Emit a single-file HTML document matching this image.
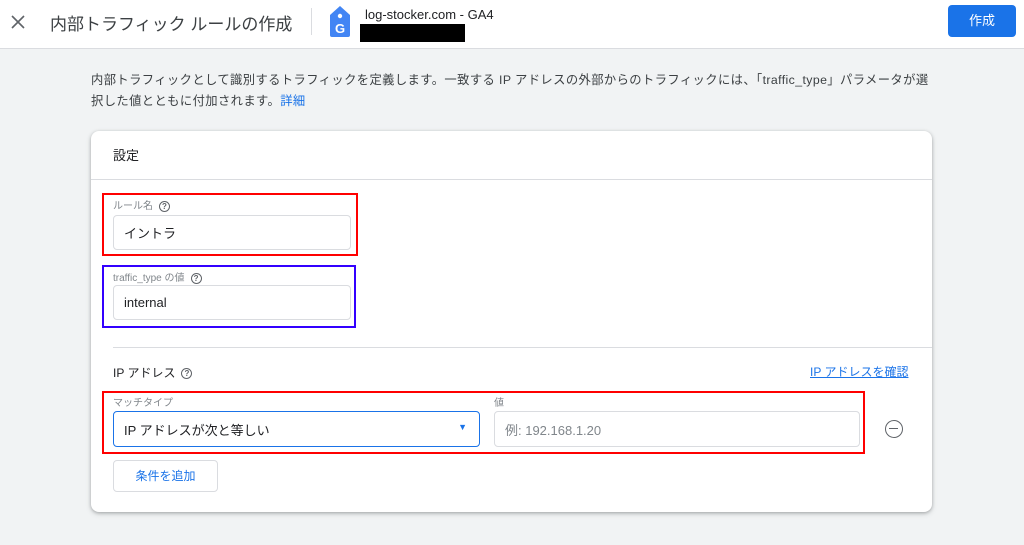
<!DOCTYPE html>
<html><head><meta charset="utf-8"><style>
*{box-sizing:border-box;margin:0;padding:0}
body{width:1024px;height:545px;background:#f1f3f4;font-family:"Liberation Sans","Noto Sans CJK JP",sans-serif;position:relative;overflow:hidden;color:#202124}
.a{position:absolute}
.hdr{left:0;top:0;width:1024px;height:49px;background:#fff;border-bottom:1px solid #dadce0}
.card{left:91px;top:131px;width:841px;height:381px;background:#fff;border-radius:8px;box-shadow:0 1px 3px rgba(60,64,67,.35),0 2px 6px rgba(60,64,67,.15)}
.inp{border:1px solid #dadce0;border-radius:4px;background:#fff;font-size:13px;padding-left:10px;display:flex;align-items:center}
.lbl{font-size:10px;color:#80868b}
.q{display:inline-block;width:11px;height:11px;border:1.3px solid #5f6368;border-radius:50%;font-size:8px;line-height:9px;text-align:center;color:#5f6368;font-weight:bold;vertical-align:middle;margin-left:6px}
</style></head><body>
<div class="a hdr"></div>
<svg class="a" style="left:11px;top:15px" width="14" height="14" viewBox="0 0 14 14"><path d="M1 1L13 13M13 1L1 13" stroke="#5f6368" stroke-width="1.6"/></svg>
<div class="a" style="left:50px;top:10px;font-size:17px;color:#3c4043">内部トラフィック ルールの作成</div>
<div class="a" style="left:311px;top:8px;width:1px;height:27px;background:#dadce0"></div>
<svg class="a" style="left:328px;top:4px" width="24" height="34" viewBox="0 0 24 34"><path d="M2 11 L12 2 L22 11 V31 Q22 33 20 33 H4 Q2 33 2 31 Z" fill="#4285f4"/><circle cx="12" cy="12" r="2.2" fill="#fff"/><text x="12" y="29" font-size="13" font-weight="bold" fill="#fff" text-anchor="middle" font-family="Liberation Sans">G</text></svg>
<div class="a" style="left:365px;top:7px;font-size:13px;color:#202124">log-stocker.com - GA4</div>
<div class="a" style="left:360px;top:24px;width:105px;height:18px;background:#000"></div>
<div class="a" style="left:948px;top:5px;width:68px;height:32px;background:#1a73e8;border-radius:4px;color:#fff;font-size:13px;text-align:center;line-height:32px">作成</div>
<div class="a" style="left:91px;top:70px;width:860px;font-size:12.3px;line-height:21px;color:#3c4043;letter-spacing:0.4px">内部トラフィックとして識別するトラフィックを定義します。一致する IP アドレスの外部からのトラフィックには、「traffic_type」パラメータが選<br>択した値とともに付加されます。<span style="color:#1a73e8">詳細</span></div>
<div class="a card"></div>
<div class="a" style="left:113px;top:145px;font-size:13px">設定</div>
<div class="a" style="left:91px;top:179px;width:841px;height:1px;background:#dadce0"></div>
<div class="a" style="left:102px;top:193px;width:256px;height:63px;border:2px solid #f00"></div>
<div class="a lbl" style="left:113px;top:197px">ルール名<span class="q">?</span></div>
<div class="a inp" style="left:113px;top:215px;width:238px;height:35px">イントラ</div>
<div class="a" style="left:102px;top:265px;width:254px;height:63px;border:2px solid #3300ff"></div>
<div class="a lbl" style="left:113px;top:269px">traffic_type の値<span class="q">?</span></div>
<div class="a inp" style="left:113px;top:285px;width:238px;height:35px">internal</div>
<div class="a" style="left:113px;top:347px;width:819px;height:1px;background:#dadce0"></div>
<div class="a" style="left:113px;top:364px;font-size:12px;color:#202124">IP アドレス<span class="q">?</span></div>
<div class="a" style="left:810px;top:363px;font-size:12px;color:#1a73e8;text-decoration:underline">IP アドレスを確認</div>
<div class="a" style="left:102px;top:391px;width:763px;height:63px;border:2px solid #f00"></div>
<div class="a lbl" style="left:113px;top:394px">マッチタイプ</div>
<div class="a lbl" style="left:494px;top:394px">値</div>
<div class="a inp" style="left:113px;top:411px;width:367px;height:36px;border:1.5px solid #1a73e8">IP アドレスが次と等しい<span style="position:absolute;right:12px;top:10px;color:#1a73e8;font-size:9px">▼</span></div>
<div class="a inp" style="left:494px;top:411px;width:366px;height:36px;color:#80868b">例: 192.168.1.20</div>
<div class="a" style="left:885px;top:420px;width:18px;height:18px;border:1.8px solid #5f6368;border-radius:50%"><div style="position:absolute;left:3px;top:6.5px;width:9px;height:1.8px;background:#5f6368"></div></div>
<div class="a" style="left:113px;top:460px;width:105px;height:32px;border:1px solid #dadce0;border-radius:4px;color:#1a73e8;font-size:12px;text-align:center;line-height:30px">条件を追加</div>
</body></html>
